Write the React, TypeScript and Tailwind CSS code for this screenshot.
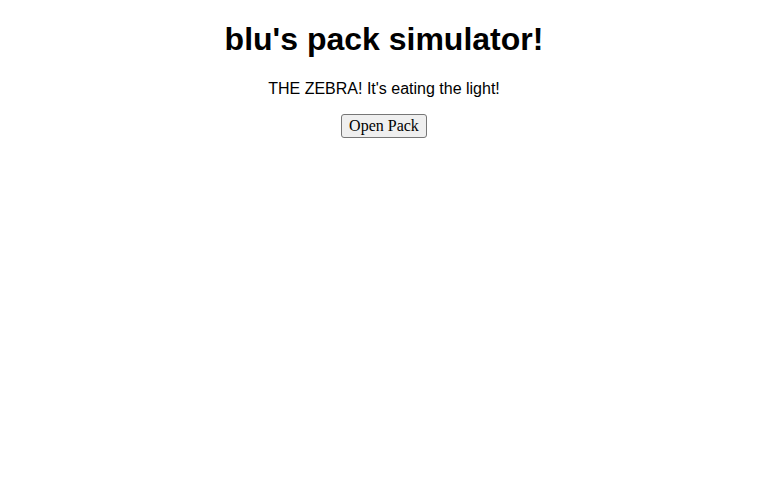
export default function App() {
  return (
    <div className="min-h-screen bg-white px-2 text-center font-['Liberation_Sans',Arial,sans-serif] text-black">
      <h1 className="pt-[21px] pb-[22px] text-[32px] font-bold leading-[37px]">blu's pack simulator!</h1>
      <p className="mb-4 text-base leading-[18px]">THE ZEBRA! It's eating the light!</p>
      <button className="rounded-[3px] border border-[#767676] bg-[#efefef] px-[7px] py-[2px] font-['Liberation_Serif','Times_New_Roman',serif] text-base leading-[18px] text-black">
        Open Pack
      </button>
    </div>
  )
}
